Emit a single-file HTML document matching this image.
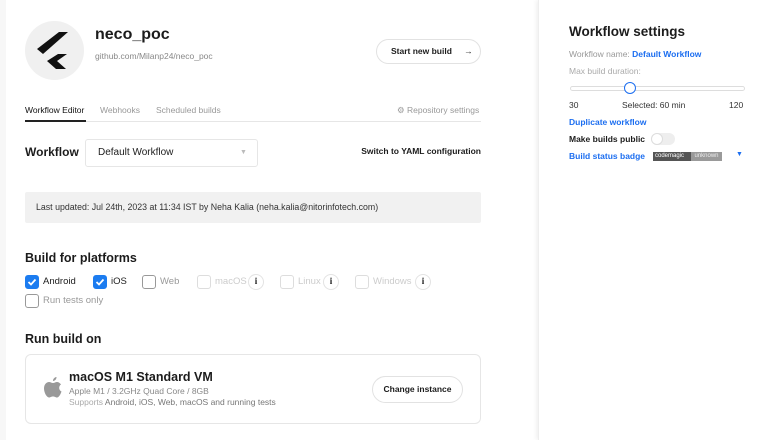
<!DOCTYPE html>
<html><head><meta charset="utf-8"><style>
*{margin:0;padding:0;box-sizing:border-box}
body{width:768px;height:440px;overflow:hidden;background:#fff;font-family:"Liberation Sans",sans-serif;color:#1c1c1c;position:relative}
.a{position:absolute;white-space:nowrap}
.cb{position:absolute;width:14px;height:14px;border:1.5px solid #999;border-radius:3px;background:#fff}
.cb.on{background:#1c7cf0;border-color:#1c7cf0}
.cb.dis{border-color:#ddd}
.lbl{position:absolute;font-size:9.5px;line-height:12px}
.info{position:absolute;width:16px;height:16px;border:1.5px solid #e3e3e3;border-radius:50%;font-size:9px;font-weight:bold;text-align:center;line-height:13px;font-family:"Liberation Serif",serif}
</style></head><body>
<div class="a" style="left:0;top:0;width:6px;height:440px;background:#f7f7f7"></div>
<div class="a" style="left:25px;top:21px;width:59px;height:59px;border-radius:50%;background:#f0f0f0"></div>
<svg class="a" style="left:25px;top:21px" width="59" height="59" viewBox="0 0 59 59"><polygon points="34,11 43,11 18,33 12,28" fill="#111"/><polygon points="33,33 42,33 32,40 41,48 31,48 22,40" fill="#111"/></svg>
<div class="a" style="left:95px;top:26px;font-size:16px;font-weight:bold">neco_poc</div>
<div class="a" style="left:95px;top:51px;font-size:8.5px;color:#888">github.com/Milanp24/neco_poc</div>
<div class="a" style="left:376px;top:39px;width:105px;height:25px;border:1px solid #e2e2e2;border-radius:13px;font-size:8.5px;font-weight:bold;line-height:23px;padding-left:14px">Start new build <span style="margin-left:10px">→</span></div>
<div class="a" style="left:25px;top:105px;font-size:8.5px;color:#111">Workflow Editor</div>
<div class="a" style="left:100px;top:105px;font-size:8.5px;color:#999">Webhooks</div>
<div class="a" style="left:156px;top:105px;font-size:8.5px;color:#999">Scheduled builds</div>
<div class="a" style="left:397px;top:105px;font-size:8.5px;color:#999">⚙ Repository settings</div>
<div class="a" style="left:25px;top:121px;width:456px;height:1px;background:#e6e6e6"></div>
<div class="a" style="left:25px;top:120px;width:61px;height:2px;background:#222"></div>
<div class="a" style="left:25px;top:145px;font-size:12px;font-weight:bold">Workflow</div>
<div class="a" style="left:85px;top:139px;width:173px;height:28px;border:1px solid #e6e6e6;border-radius:3px;font-size:10px;line-height:26px;padding-left:12px">Default Workflow<span style="position:absolute;left:154px;color:#bbb;font-size:7px">▼</span></div>
<div class="a" style="right:287px;top:146px;font-size:8.5px;font-weight:bold">Switch to YAML configuration</div>
<div class="a" style="left:25px;top:192px;width:456px;height:31px;background:#f1f1f1;border-radius:2px;font-size:8.8px;line-height:31px;padding-left:11px;color:#333">Last updated: Jul 24th, 2023 at 11:34 IST by Neha Kalia (neha.kalia@nitorinfotech.com)</div>
<div class="a" style="left:25px;top:251px;font-size:12.5px;font-weight:bold">Build for platforms</div>
<div class="cb on" style="left:25px;top:275px"></div><svg class="a" style="left:27px;top:277px" width="10" height="10"><path d="M1.5 5 L4 7.5 L8.5 2.5" stroke="#fff" stroke-width="1.8" fill="none"/></svg>
<div class="lbl" style="left:43px;top:276px">Android</div>
<div class="cb on" style="left:93px;top:275px"></div><svg class="a" style="left:95px;top:277px" width="10" height="10"><path d="M1.5 5 L4 7.5 L8.5 2.5" stroke="#fff" stroke-width="1.8" fill="none"/></svg>
<div class="lbl" style="left:111px;top:276px">iOS</div>
<div class="cb" style="left:142px;top:275px"></div>
<div class="lbl" style="left:160px;top:276px;color:#999">Web</div>
<div class="cb dis" style="left:197px;top:275px"></div>
<div class="lbl" style="left:215px;top:276px;color:#ccc">macOS</div>
<div class="info" style="left:248px;top:274px">i</div>
<div class="cb dis" style="left:280px;top:275px"></div>
<div class="lbl" style="left:298px;top:276px;color:#ccc">Linux</div>
<div class="info" style="left:323px;top:274px">i</div>
<div class="cb dis" style="left:355px;top:275px"></div>
<div class="lbl" style="left:373px;top:276px;color:#ccc">Windows</div>
<div class="info" style="left:415px;top:274px">i</div>
<div class="cb" style="left:25px;top:294px"></div>
<div class="lbl" style="left:43px;top:295px;color:#999">Run tests only</div>
<div class="a" style="left:25px;top:332px;font-size:12.5px;font-weight:bold">Run build on</div>
<div class="a" style="left:25px;top:354px;width:456px;height:70px;border:1px solid #e6e6e6;border-radius:6px"></div>
<svg class="a" style="left:43px;top:376px" width="20" height="24" viewBox="0 0 20 24"><path d="M13.5 1 C13.6 3 12 5 10 5 C9.9 3 11.5 1.2 13.5 1 Z" fill="#999"/><path d="M10 7 C11.5 7 12.5 6 14 6 C15.5 6 17 7 18 8.5 C15.5 10 15.5 14 18.5 15.5 C17.5 18.5 15.8 21.5 14 21.5 C12.5 21.5 12 20.5 10 20.5 C8 20.5 7.5 21.5 6 21.5 C4 21.5 1 17 1 12.5 C1 8.5 3.5 6 6 6 C7.5 6 8.5 7 10 7 Z" fill="#999"/></svg>
<div class="a" style="left:69px;top:370px;font-size:12.5px;font-weight:bold">macOS M1 Standard VM</div>
<div class="a" style="left:69px;top:386px;font-size:8.5px;color:#888">Apple M1 / 3.2GHz Quad Core / 8GB</div>
<div class="a" style="left:69px;top:397px;font-size:8.5px;color:#aaa">Supports <span style="color:#777">Android, iOS, Web, macOS and running tests</span></div>
<div class="a" style="left:372px;top:376px;width:91px;height:27px;border:1px solid #e2e2e2;border-radius:14px;font-size:8.5px;font-weight:bold;line-height:25px;text-align:center">Change instance</div>
<div class="a" style="left:538px;top:0;width:230px;height:440px;background:#fff;box-shadow:-2px 0 4px rgba(0,0,0,0.06);border-left:1px solid #eee"></div>
<div class="a" style="left:569px;top:24px;font-size:13.5px;font-weight:bold">Workflow settings</div>
<div class="a" style="left:569px;top:49px;font-size:8.5px;color:#999">Workflow name: <b style="color:#1c6ef0">Default Workflow</b></div>
<div class="a" style="left:569px;top:66px;font-size:8.5px;color:#aaa">Max build duration:</div>
<div class="a" style="left:570px;top:86px;width:175px;height:5px;border:1px solid #ddd;border-radius:3px"></div>
<div class="a" style="left:624px;top:82px;width:12px;height:12px;border:1.5px solid #1c6ef0;border-radius:50%;background:#fff"></div>
<div class="a" style="left:569px;top:100px;font-size:8.5px;color:#333">30</div>
<div class="a" style="left:622px;top:100px;font-size:8.5px;color:#333">Selected: 60 min</div>
<div class="a" style="left:729px;top:100px;font-size:8.5px;color:#333">120</div>
<div class="a" style="left:569px;top:117px;font-size:8.5px;font-weight:bold;color:#1c6ef0">Duplicate workflow</div>
<div class="a" style="left:569px;top:134px;font-size:8.5px;font-weight:bold">Make builds public</div>
<div class="a" style="left:651px;top:133px;width:24px;height:12px;border-radius:6px;background:#eee"></div>
<div class="a" style="left:651px;top:133px;width:12px;height:12px;border-radius:50%;background:#fff;border:1px solid #ddd"></div>
<div class="a" style="left:569px;top:151px;font-size:8.5px;font-weight:bold;color:#1c6ef0">Build status badge</div>
<div class="a" style="left:653px;top:152px;width:38px;height:9px;background:#555;font-size:6px;color:#fff;line-height:9px;padding-left:2px">codemagic</div>
<div class="a" style="left:691px;top:152px;width:31px;height:9px;background:#9a9a9a;font-size:6px;color:#eee;line-height:9px;text-align:center">unknown</div>
<div class="a" style="left:736px;top:151px;font-size:7px;color:#1c6ef0">▼</div>
</body></html>
